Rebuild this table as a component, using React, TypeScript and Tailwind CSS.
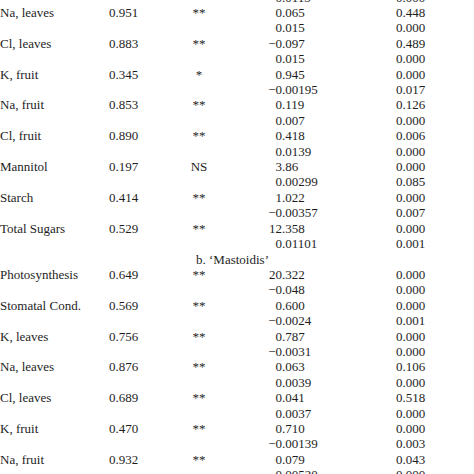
import React from 'react';

type Entry = {
  label: string;
  r: string;
  sig: string;
  lines: [string, string][];
};

const sectionA: Entry[] = [
  { label: 'Na, leaves', r: '0.951', sig: '**', lines: [['0.065', '0.448'], ['0.015', '0.000']] },
  { label: 'Cl, leaves', r: '0.883', sig: '**', lines: [['\u22120.097', '0.489'], ['0.015', '0.000']] },
  { label: 'K, fruit', r: '0.345', sig: '*', lines: [['0.945', '0.000'], ['\u22120.00195', '0.017']] },
  { label: 'Na, fruit', r: '0.853', sig: '**', lines: [['0.119', '0.126'], ['0.007', '0.000']] },
  { label: 'Cl, fruit', r: '0.890', sig: '**', lines: [['0.418', '0.006'], ['0.0139', '0.000']] },
  { label: 'Mannitol', r: '0.197', sig: 'NS', lines: [['3.86', '0.000'], ['0.00299', '0.085']] },
  { label: 'Starch', r: '0.414', sig: '**', lines: [['1.022', '0.000'], ['\u22120.00357', '0.007']] },
  { label: 'Total Sugars', r: '0.529', sig: '**', lines: [['12.358', '0.000'], ['0.01101', '0.001']] },
];

const sectionB: Entry[] = [
  { label: 'Photosynthesis', r: '0.649', sig: '**', lines: [['20.322', '0.000'], ['\u22120.048', '0.000']] },
  { label: 'Stomatal Cond.', r: '0.569', sig: '**', lines: [['0.600', '0.000'], ['\u22120.0024', '0.001']] },
  { label: 'K, leaves', r: '0.756', sig: '**', lines: [['0.787', '0.000'], ['\u22120.0031', '0.000']] },
  { label: 'Na, leaves', r: '0.876', sig: '**', lines: [['0.063', '0.106'], ['0.0039', '0.000']] },
  { label: 'Cl, leaves', r: '0.689', sig: '**', lines: [['0.041', '0.518'], ['0.0037', '0.000']] },
  { label: 'K, fruit', r: '0.470', sig: '**', lines: [['0.710', '0.000'], ['\u22120.00139', '0.003']] },
  { label: 'Na, fruit', r: '0.932', sig: '**', lines: [['0.079', '0.043'], ['0.00520', '0.000']] },
];

// decimal-aligned coefficient
const Coef = ({ value }: { value: string }) => {
  const [whole, frac] = value.split('.');
  return (
    <div className="flex w-[156px] shrink-0">
      <span className="w-[42px] text-right shrink-0 pl-0 ml-[0px]">{whole}</span>
      <span className="text-left">.{frac}</span>
    </div>
  );
};

const Line = ({ label = '', r = '', sig = '', coef, p }: { label?: string; r?: string; sig?: string; coef: string; p: string }) => (
  <div className="flex h-[15.41px] items-center whitespace-nowrap">
    <span className="w-[109px] shrink-0">{label}</span>
    <span className="w-[60px] shrink-0">{r}</span>
    <span className="w-[60px] shrink-0 text-center -ml-[0px]">{sig}</span>
    <div className="w-[11px] shrink-0" />
    <Coef value={coef} />
  <span className="shrink-0 -ml-[0px]">{p}</span>
  </div>
);

const Group = ({ e }: { e: Entry }) => (
  <>
    <Line label={e.label} r={e.r} sig={e.sig} coef={e.lines[0][0]} p={e.lines[0][1]} />
    <Line coef={e.lines[1][0]} p={e.lines[1][1]} />
  </>
);

export default function App() {
  return (
    <div className="w-[474px] h-[474px] overflow-hidden bg-white">
      <div
        className="mt-[-10.4px] text-[13px] leading-[15.41px] text-[#1e1e1e]"
        style={{ fontFamily: '"Liberation Serif", "Times New Roman", serif' }}
      >
        <Line coef="0.0113" p="0.000" />
        {sectionA.map((e, i) => (
          <Group key={`a${i}`} e={e} />
        ))}
        <div className="h-[15.41px] flex items-center pl-[196px] whitespace-nowrap">b. {'\u2018'}Mastoidis{'\u2019'}</div>
        {sectionB.map((e, i) => (
          <Group key={`b${i}`} e={e} />
        ))}
      </div>
    </div>
  );
}
